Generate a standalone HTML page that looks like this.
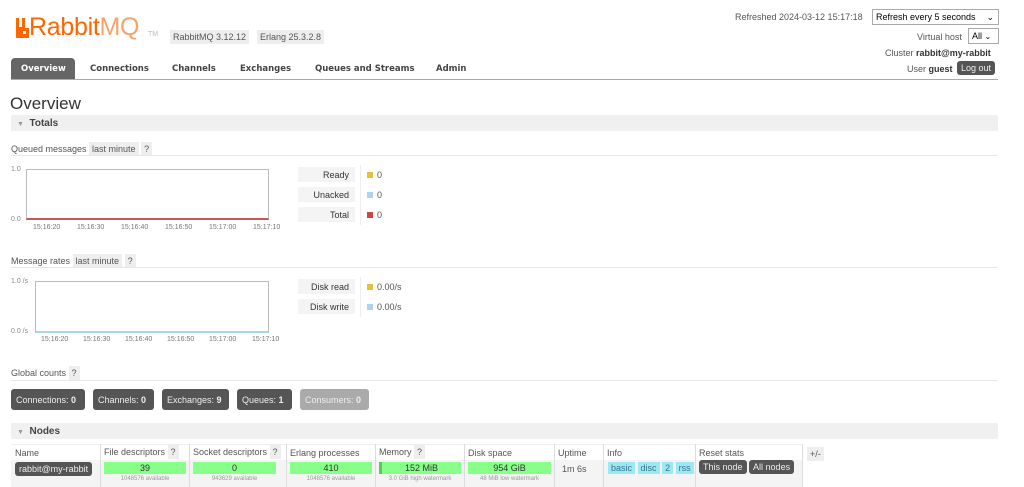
<!DOCTYPE html>
<html><head><style>
*{margin:0;padding:0;box-sizing:border-box}
body{width:1024px;height:487px;background:#fff;font-family:"Liberation Sans",sans-serif;font-size:9px;color:#555;position:relative;overflow:hidden}
.a{position:absolute;white-space:nowrap}
.badge{background:#eee;color:#555;padding:2px 3px}
.tab{font-family:"DejaVu Sans",sans-serif;font-weight:bold;font-size:8.5px;color:#444}
.sec{background:#f0f0f0;height:16px;left:11px;width:987px;font-weight:bold;font-size:10px;color:#444;padding:3px 0 0 6px}
.hl{height:1px;background:#e6e6e6;left:11px;width:987px}
.lg{background:#f4f4f4;width:57px;height:15px;text-align:right;padding:3px 6px 0 0;font-size:9px;color:#333}
.sq{width:6px;height:6px}
.btn{background:#555;color:#eee;border-radius:3px;height:21px;padding:6px 5px 0;font-size:9px}
.td{background:#8f8;text-align:center;font-size:9px;color:#333;height:12px;padding-top:1px}
.sub{font-size:6px;color:#999;text-align:center}
.tag{background:#9de7f7;color:#378;padding:1px 3px}
.db{background:#555;color:#eee;border-radius:3px;padding:2px 4px}
.t{position:absolute;font-size:7px;color:#777}
</style></head><body>
<svg class="a" style="left:16px;top:18px" width="13" height="20" viewBox="0 0 13 20"><path d="M0 0h3v9h3V0h3v10h4v10H0z" fill="#f60"/><rect x="7" y="13" width="3" height="3" fill="#fff"/></svg>
<div class="a" style="left:29px;top:13px;font-size:25px;color:#f60;letter-spacing:-0.3px">Rabbit<span style="color:#f9a26a">MQ</span></div>
<div class="a" style="left:148px;top:31px;font-size:7px;color:#bbb">TM</div>
<div class="a badge" style="left:170px;top:30px">RabbitMQ 3.12.12</div>
<div class="a badge" style="left:257px;top:30px">Erlang 25.3.2.8</div>
<div class="a" style="left:735px;top:12px;color:#555">Refreshed 2024-03-12 15:17:18</div>
<div class="a" style="left:872px;top:9px;width:127px;height:16px;border:1px solid #aaa;font-size:9px;color:#000;padding:2px 3px">Refresh every 5 seconds<span style="position:absolute;right:4px">⌄</span></div>
<div class="a" style="left:917px;top:32px;color:#555">Virtual host</div>
<div class="a" style="left:968px;top:28px;width:31px;height:16px;border:1px solid #aaa;color:#000;padding:2px 3px">All <span style="font-size:8px">⌄</span></div>
<div class="a" style="left:885px;top:48px;color:#555">Cluster <b style="color:#333">rabbit@my-rabbit</b></div>
<div class="a" style="left:907px;top:64px;color:#555">User <b style="color:#333">guest</b></div>
<div class="a" style="left:957px;top:61px;background:#555;color:#eee;border-radius:3px;padding:2px 4px">Log out</div>
<div class="a" style="left:11px;top:58px;width:64px;height:22px;background:#666;border-radius:4px 4px 0 0"></div>
<div class="a tab" style="left:21px;top:64px;color:#fff">Overview</div>
<div class="a tab" style="left:90px;top:64px">Connections</div>
<div class="a tab" style="left:172px;top:64px">Channels</div>
<div class="a tab" style="left:240px;top:64px">Exchanges</div>
<div class="a tab" style="left:315px;top:64px">Queues and Streams</div>
<div class="a tab" style="left:436px;top:64px">Admin</div>
<div class="a" style="left:11px;top:79px;width:987px;height:1px;background:#aaa"></div>
<div class="a" style="left:10px;top:94px;font-size:17px;color:#333">Overview</div>
<div class="a sec" style="top:115px"><span style="color:#999;font-size:7px">▼</span>&nbsp; Totals</div>
<div class="a" style="left:11px;top:144px;color:#555">Queued messages <span class="badge">last minute</span> <span class="badge">?</span></div>
<div class="a hl" style="top:155px"></div>
<div class="a" style="left:11px;top:166px;font-size:7px;color:#888">1.0</div>
<div class="a" style="left:11px;top:216px;font-size:7px;color:#888">0.0</div>
<div class="a" style="left:26px;top:169px;width:243px;height:51px;border:1px solid #bbb;border-bottom:2px solid #c55"></div>
<div class="t" style="left:33px;top:224px">15:16:20</div><div class="t" style="left:77px;top:224px">15:16:30</div><div class="t" style="left:121px;top:224px">15:16:40</div><div class="t" style="left:165px;top:224px">15:16:50</div><div class="t" style="left:209px;top:224px">15:17:00</div><div class="t" style="left:253px;top:224px">15:17:10</div>
<div class="a lg" style="left:298px;top:167px">Ready</div>
<div class="a lg" style="left:298px;top:187px">Unacked</div>
<div class="a lg" style="left:298px;top:207px">Total</div>
<div class="a" style="left:360px;top:165px;width:1px;height:60px;background:#eee"></div>
<div class="a sq" style="left:367px;top:172px;background:#e8c040"></div><div class="a" style="left:377px;top:170px">0</div>
<div class="a sq" style="left:367px;top:192px;background:#acd4ec"></div><div class="a" style="left:377px;top:190px">0</div>
<div class="a sq" style="left:367px;top:212px;background:#c44"></div><div class="a" style="left:377px;top:210px">0</div>
<div class="a" style="left:11px;top:256px;color:#555">Message rates <span class="badge">last minute</span> <span class="badge">?</span></div>
<div class="a hl" style="top:267px"></div>
<div class="a" style="left:11px;top:278px;font-size:7px;color:#888">1.0 /s</div>
<div class="a" style="left:11px;top:328px;font-size:7px;color:#888">0.0 /s</div>
<div class="a" style="left:35px;top:281px;width:234px;height:52px;border:1px solid #bbb;border-bottom:2px solid #acd4ec"></div>
<div class="t" style="left:41px;top:336px">15:16:20</div><div class="t" style="left:83px;top:336px">15:16:30</div><div class="t" style="left:125px;top:336px">15:16:40</div><div class="t" style="left:167px;top:336px">15:16:50</div><div class="t" style="left:209px;top:336px">15:17:00</div><div class="t" style="left:252px;top:336px">15:17:10</div>
<div class="a lg" style="left:298px;top:279px">Disk read</div>
<div class="a lg" style="left:298px;top:299px">Disk write</div>
<div class="a" style="left:360px;top:277px;width:1px;height:40px;background:#eee"></div>
<div class="a sq" style="left:367px;top:284px;background:#e8c040"></div><div class="a" style="left:377px;top:282px">0.00/s</div>
<div class="a sq" style="left:367px;top:304px;background:#acd4ec"></div><div class="a" style="left:377px;top:302px">0.00/s</div>
<div class="a" style="left:11px;top:368px;color:#555">Global counts <span class="badge">?</span></div>
<div class="a hl" style="top:380px"></div>
<div class="a btn" style="left:11px;top:389px;width:74px">Connections: <b>0</b></div>
<div class="a btn" style="left:93px;top:389px;width:61px">Channels: <b>0</b></div>
<div class="a btn" style="left:162px;top:389px;width:67px">Exchanges: <b>9</b></div>
<div class="a btn" style="left:237px;top:389px;width:55px">Queues: <b>1</b></div>
<div class="a btn" style="left:300px;top:389px;width:69px;background:#aaa;color:#eee">Consumers: <b>0</b></div>
<div class="a sec" style="top:423px"><span style="color:#999;font-size:7px">▼</span>&nbsp; Nodes</div>
<div class="a" style="left:11px;top:444px;width:792px;height:43px;background:#f4f4f4"></div>
<div class="a" style="left:11px;top:444px;width:792px;height:16px;background:#fff;border-top:1px solid #eee"></div>
<div class="a" style="left:15px;top:448px">Name</div>
<div class="a" style="left:104px;top:447px">File descriptors <span class="badge">?</span></div>
<div class="a" style="left:193px;top:447px">Socket descriptors <span class="badge">?</span></div>
<div class="a" style="left:290px;top:448px">Erlang processes</div>
<div class="a" style="left:379px;top:447px">Memory <span class="badge">?</span></div>
<div class="a" style="left:468px;top:448px">Disk space</div>
<div class="a" style="left:558px;top:448px">Uptime</div>
<div class="a" style="left:607px;top:448px">Info</div>
<div class="a" style="left:699px;top:448px">Reset stats</div>
<div class="a" style="left:100px;top:444px;width:1px;height:43px;background:#ddd"></div>
<div class="a" style="left:189px;top:444px;width:1px;height:43px;background:#ddd"></div>
<div class="a" style="left:286px;top:444px;width:1px;height:43px;background:#ddd"></div>
<div class="a" style="left:375px;top:444px;width:1px;height:43px;background:#ddd"></div>
<div class="a" style="left:464px;top:444px;width:1px;height:43px;background:#ddd"></div>
<div class="a" style="left:554px;top:444px;width:1px;height:43px;background:#ddd"></div>
<div class="a" style="left:603px;top:444px;width:1px;height:43px;background:#ddd"></div>
<div class="a" style="left:695px;top:444px;width:1px;height:43px;background:#ddd"></div>
<div class="a" style="left:802px;top:444px;width:1px;height:43px;background:#ddd"></div>
<div class="a badge" style="left:807px;top:447px">+/-</div>
<div class="a" style="left:15px;top:462px;background:#555;color:#eee;border-radius:3px;padding:2px 4px">rabbit@my-rabbit</div>
<div class="a td" style="left:104px;top:462px;width:82px">39</div><div class="a sub" style="left:104px;top:476px;width:82px">1048576 available</div>
<div class="a td" style="left:193px;top:462px;width:83px">0</div><div class="a sub" style="left:193px;top:476px;width:83px">943629 available</div>
<div class="a td" style="left:290px;top:462px;width:82px">410</div><div class="a sub" style="left:290px;top:476px;width:82px">1048576 available</div>
<div class="a td" style="left:379px;top:462px;width:82px;border-left:3px solid #5c5">152 MiB</div><div class="a sub" style="left:379px;top:476px;width:82px">3.0 GiB high watermark</div>
<div class="a td" style="left:468px;top:462px;width:83px">954 GiB</div><div class="a sub" style="left:468px;top:476px;width:83px">48 MiB low watermark</div>
<div class="a" style="left:562px;top:464px">1m 6s</div>
<div class="a" style="left:608px;top:463px"><span class="tag">basic</span> <span class="tag">disc</span> <span class="tag">2</span> <span class="tag">rss</span></div>
<div class="a" style="left:699px;top:462px"><span class="db">This node</span> <span class="db">All nodes</span></div>
</body></html>
